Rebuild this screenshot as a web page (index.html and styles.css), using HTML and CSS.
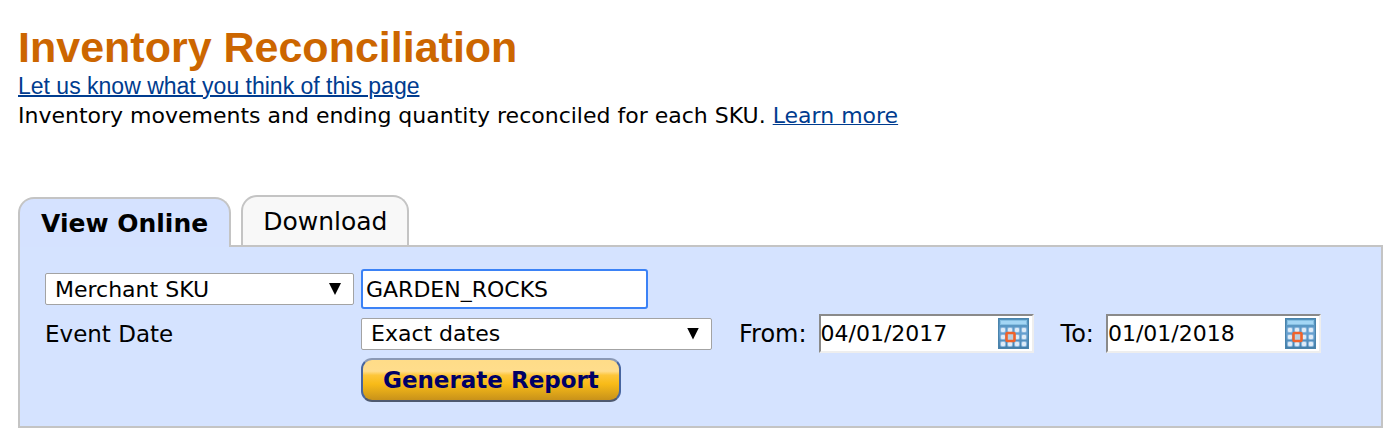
FILE: index.html
```html
<!DOCTYPE html>
<html lang="en">
<head>
<meta charset="utf-8">
<title>Inventory Reconciliation</title>
<link rel="stylesheet" href="styles.css">
</head>
<body>
<svg class="sprite" width="0" height="0" aria-hidden="true">
  <defs>
    <linearGradient id="cal-bg" x1="0" y1="0" x2="0" y2="1">
      <stop offset="0" stop-color="#4f8fb8"/>
      <stop offset="0.5" stop-color="#659fcf"/>
      <stop offset="1" stop-color="#417ca6"/>
    </linearGradient>
    <symbol id="calendar" viewBox="0 0 31 31">
      <rect width="31" height="31" fill="url(#cal-bg)"/>
      <rect x="0.5" y="0.5" width="30" height="30" fill="none" stroke="#4a83ab"/>
      <rect x="2" y="2" width="27" height="5" fill="#86bfe2"/>
      <rect x="3" y="3" width="25" height="3" fill="#a3d6f5"/>
      <g fill="#8ab6dc">
        <rect x="2" y="9" width="6" height="6" rx="2"/><rect x="9" y="9" width="6" height="6" rx="2"/><rect x="16" y="9" width="6" height="6" rx="2"/><rect x="23" y="9" width="6" height="6" rx="2"/>
        <rect x="2" y="16" width="6" height="6" rx="2"/><rect x="9" y="16" width="6" height="6" rx="2"/><rect x="16" y="16" width="6" height="6" rx="2"/><rect x="23" y="16" width="6" height="6" rx="2"/>
        <rect x="2" y="23" width="6" height="6" rx="2"/><rect x="9" y="23" width="6" height="6" rx="2"/><rect x="16" y="23" width="6" height="6" rx="2"/><rect x="23" y="23" width="6" height="6" rx="2"/>
      </g>
      <g fill="#deebf7">
        <rect x="3" y="10" width="4" height="4" rx="1"/><rect x="10" y="10" width="4" height="4" rx="1"/><rect x="17" y="10" width="4" height="4" rx="1"/><rect x="24" y="10" width="4" height="4" rx="1"/>
        <rect x="3" y="17" width="4" height="4" rx="1"/><rect x="17" y="17" width="4" height="4" rx="1"/><rect x="24" y="17" width="4" height="4" rx="1"/>
        <rect x="3" y="24" width="4" height="4" rx="1"/><rect x="10" y="24" width="4" height="4" rx="1"/><rect x="17" y="24" width="4" height="4" rx="1"/><rect x="24" y="24" width="4" height="4" rx="1"/>
      </g>
      <rect x="8.5" y="15" width="8" height="8" rx="1" fill="#b9cfe0" stroke="#f0622a" stroke-width="2.6"/>
    </symbol>
  </defs>
</svg>
<main class="page">
  <h1 class="title">Inventory Reconciliation</h1>
  <a class="feedback" href="#">Let us know what you think of this page</a>
  <p class="intro">Inventory movements and ending quantity reconciled for each SKU. <a href="#">Learn more</a></p>

  <nav class="tabs">
    <a class="tab tab-active" href="#" aria-current="page">View Online</a>
    <a class="tab" href="#">Download</a>
  </nav>

  <form class="panel">
    <div class="row">
      <span class="select first-col">
        <select aria-label="Search by"><option>Merchant SKU</option></select>
      </span>
      <input class="sku" type="text" aria-label="SKU value" value="GARDEN_ROCKS">
    </div>
    <div class="row">
      <label class="first-col" for="range">Event Date</label>
      <span class="select range">
        <select id="range"><option>Exact dates</option></select>
      </span>
      <div class="date">
        <label for="from">From:</label>
        <span class="date-box">
          <input id="from" type="text" value="04/01/2017">
          <button class="pick" type="button" aria-label="Choose start date"><svg width="31" height="31"><use href="#calendar"/></svg></button>
        </span>
      </div>
      <div class="date">
        <label for="to">To:</label>
        <span class="date-box">
          <input id="to" type="text" value="01/01/2018">
          <button class="pick" type="button" aria-label="Choose end date"><svg width="31" height="31"><use href="#calendar"/></svg></button>
        </span>
      </div>
    </div>
    <div class="row">
      <span class="first-col"></span>
      <button class="generate" type="button">Generate Report</button>
    </div>
  </form>
</main>
</body>
</html>
```
FILE: styles.css
```css
* {
  box-sizing: border-box;
}

body {
  margin: 0;
  background: #fff;
  color: #000;
  font: 22px/28px Verdana, "DejaVu Sans", sans-serif;
}

a {
  color: #003c8f;
  text-decoration-thickness: 2px;
}

.sprite {
  position: absolute;
}

.page {
  padding: 24px 17px 16px 18px;
}

.title {
  margin: 0;
  color: #c60;
  font: bold 43px/46px Arial, "Liberation Sans", sans-serif;
}

.feedback {
  display: block;
  width: fit-content;
  font: 23px/32px Arial, "Liberation Sans", sans-serif;
}

.intro {
  margin: 0;
  line-height: 28px;
}

.intro a {
  text-decoration-thickness: 1px;
}

.tabs {
  display: flex;
  align-items: flex-end;
  gap: 10px;
  margin-top: 65px;
}

.tab {
  height: 50px;
  padding: 10px 20px 0;
  border: 2px solid #c4c4c4;
  border-bottom: 0;
  border-radius: 16px 16px 0 0;
  background: #f8f8f8;
  color: #000;
  font-size: 25px;
  line-height: 30px;
  text-decoration: none;
}

/* The active tab covers the top edge of the panel. */
.tab-active {
  position: relative;
  z-index: 1;
  margin-bottom: -2px;
  padding: 10px 21px 0;
  background: #d5e2ff;
  font-weight: bold;
}

.panel {
  display: flex;
  flex-direction: column;
  gap: 5px;
  padding: 22px 24px 24px 25px;
  border: 2px solid #c4c4c4;
  background: #d5e3ff;
}

.row {
  display: flex;
  align-items: center;
  gap: 7px;
}

.first-col {
  flex: 0 0 309px;
}

label {
  font-size: 23px;
}

input,
select {
  margin: 0;
  color: #000;
  font: inherit;
}

.select {
  position: relative;
  display: block;
}

.select select {
  display: block;
  width: 100%;
  height: 32px;
  padding: 1px 30px 0 9px;
  border: 1px solid #a3a3a3;
  border-radius: 2px;
  background: #fff;
  appearance: none;
}

.select::after {
  content: "";
  position: absolute;
  top: 10px;
  right: 13px;
  width: 12px;
  height: 12px;
  background: #000;
  clip-path: polygon(0 0, 100% 0, 50% 100%);
  pointer-events: none;
}

.range {
  width: 351px;
}

.sku {
  width: 287px;
  height: 40px;
  padding: 1px 3px 0;
  border: 2px solid #3b82f6;
  border-radius: 3px;
  background: #fff;
  outline: none;
}

.date {
  display: flex;
  align-items: center;
  gap: 12px;
  margin-left: 20px;
}

.date label {
  font-size: 24px;
}

.date-box {
  display: flex;
  align-items: center;
  width: 215px;
  height: 39px;
  padding-right: 3px;
  border: 2px solid;
  border-color: #8a8a8a #eee #eee #8a8a8a;
  background: #fff;
}

.date-box input {
  flex: 1;
  min-width: 0;
  padding: 0;
  border: 0;
  background: none;
  outline: none;
}

.pick {
  display: block;
  height: 31px;
  padding: 0;
  border: 0;
  background: none;
}

.pick svg {
  display: block;
}

.generate {
  height: 44px;
  padding: 0 20px 1px;
  border: 2px solid #4765a0;
  border-top-color: #8b99b5;
  border-bottom-color: #4f5a70;
  border-radius: 11px;
  background: linear-gradient(#ffdc88 0, #ffdd8c 28%, #fdc63a 38%, #f8bb18 60%, #c8921a 100%);
  color: #006;
  font: bold 23px/28px Verdana, "DejaVu Sans", sans-serif;
}
```
